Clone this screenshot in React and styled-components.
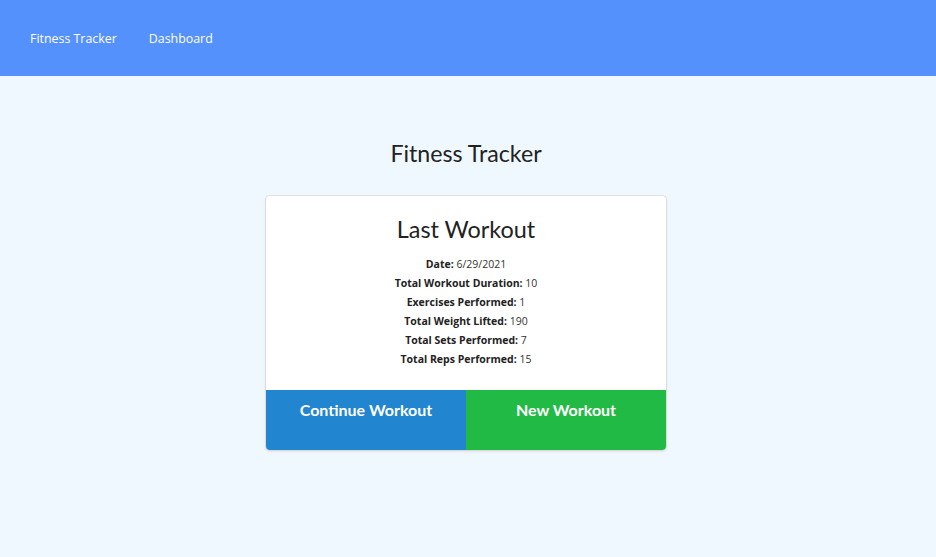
import React from 'react';
import styled, { createGlobalStyle } from 'styled-components';

const GlobalStyle = createGlobalStyle`
  html, body {
    margin: 0;
    padding: 0;
    background: #eff7ff;
    font-family: "Open Sans", "Noto Sans", sans-serif;
    color: #222;
  }
`;

const Page = styled.div`
  min-height: 557px;
  background: #eff7ff;
`;

const NavBar = styled.nav`
  height: 76px;
  box-sizing: border-box;
  background: #5591fc;
  display: flex;
  align-items: center;
  padding: 1px 0 0 30px;
  gap: 32px;
`;

const NavLink = styled.a`
  color: #fff;
  font-size: 12.4px;
  text-decoration: none;
`;

const Main = styled.main`
  display: flex;
  flex-direction: column;
  align-items: center;
  padding: 64px 4px 0 0;
`;

const Title = styled.h1`
  font-family: Lato, sans-serif;
  font-weight: 400;
  font-size: 23.2px;
  line-height: 28px;
  margin: -1px 0 29px;
  color: #222;
`;

const Card = styled.div`
  width: 400px;
  background: #fff;
  border-radius: 4px;
  box-shadow: 0 1px 3px 0 #d4d4d5, 0 0 0 1px #e2e2e4;
  overflow: hidden;
`;

const CardBody = styled.div`
  padding: 19px 16px 21px;
  text-align: center;
`;

const CardHeader = styled.h2`
  font-family: Lato, sans-serif;
  font-weight: 400;
  font-size: 23.4px;
  line-height: 28px;
  margin: 0 0 12px;
  color: #222;
`;

const StatRow = styled.div`
  font-size: 10.5px;
  line-height: 19px;
  color: #333;

  b {
    font-weight: 700;
    color: #222;
  }
`;

const Actions = styled.div`
  display: grid;
  grid-template-columns: 1fr 1fr;
`;

const ActionButton = styled.button`
  height: 60px;
  border: none;
  padding: 10px 0 0;
  display: flex;
  justify-content: center;
  align-items: flex-start;
  font-family: Lato, sans-serif;
  font-weight: 700;
  font-size: 16px;
  color: #fff;
  background: ${(p) => p.$color};
  cursor: pointer;
`;

const stats = [
  ['Date', '6/29/2021'],
  ['Total Workout Duration', '10'],
  ['Exercises Performed', '1'],
  ['Total Weight Lifted', '190'],
  ['Total Sets Performed', '7'],
  ['Total Reps Performed', '15'],
];

export default function App() {
  return (
    <Page>
      <GlobalStyle />
      <NavBar>
        <NavLink href="#">Fitness Tracker</NavLink>
        <NavLink href="#">Dashboard</NavLink>
      </NavBar>
      <Main>
        <Title>Fitness Tracker</Title>
        <Card>
          <CardBody>
            <CardHeader>Last Workout</CardHeader>
            {stats.map(([label, value]) => (
              <StatRow key={label}>
                <b>{label}:</b> {value}
              </StatRow>
            ))}
          </CardBody>
          <Actions>
            <ActionButton $color="#2185d0">Continue Workout</ActionButton>
            <ActionButton $color="#21ba45">New Workout</ActionButton>
          </Actions>
        </Card>
      </Main>
    </Page>
  );
}
